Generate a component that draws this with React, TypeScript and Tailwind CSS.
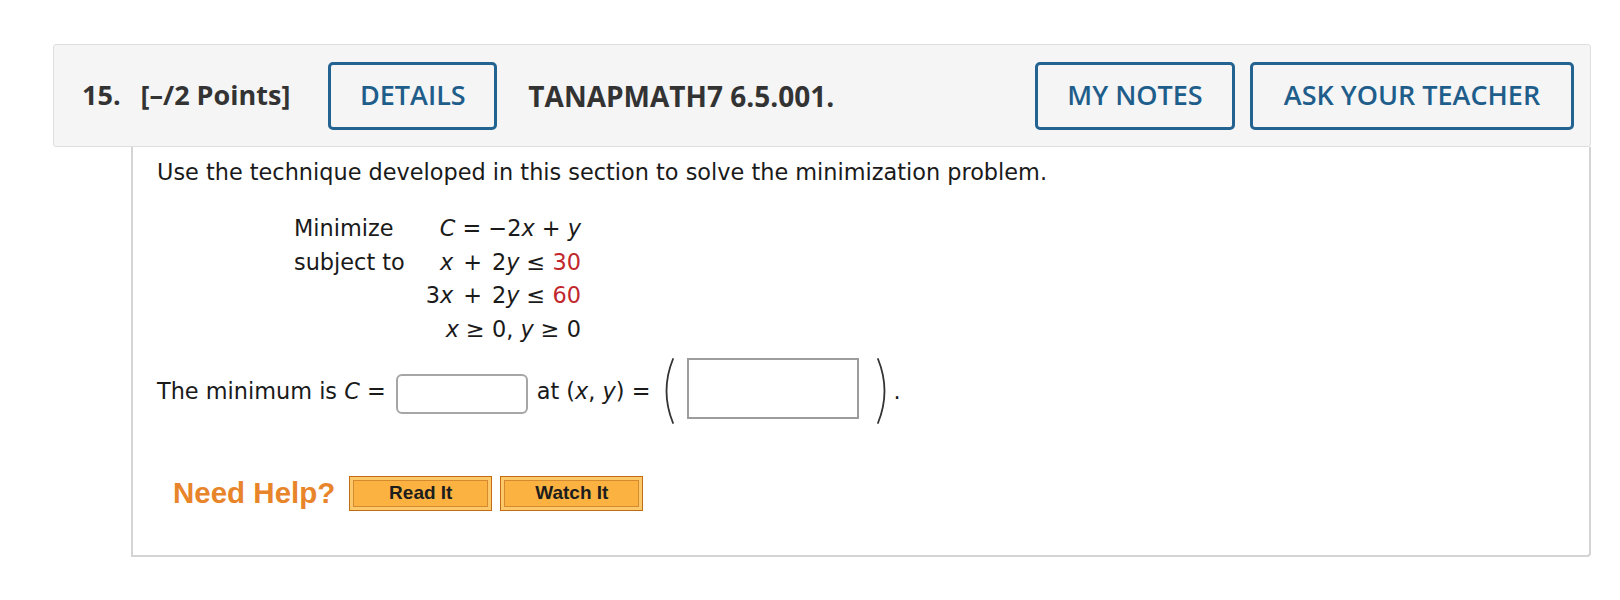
import React from "react";

function Paren({ side }: { side: "left" | "right" }) {
  const d = side === "left" ? "M13 1 Q 0 33 13 65" : "M3 1 Q 16 33 3 65";
  return (
    <svg width="16" height="66" viewBox="0 0 16 66" className="shrink-0">
      <path d={d} fill="none" stroke="#333" strokeWidth="1.8" strokeLinecap="round" />
    </svg>
  );
}

function HeaderButton({ label, width }: { label: string; width: string }) {
  return (
    <button
      className={`${width} h-[68px] shrink-0 rounded-[5px] border-[3px] border-[#236391] bg-transparent text-[27px] font-semibold text-[#1f5e8b] font-['Open_Sans',sans-serif]`}
    >
      {label}
    </button>
  );
}

function HelpButton({ label }: { label: string }) {
  return (
    <div className="w-[143px] h-[35px] shrink-0 border border-[#c06d16] bg-[#fdc86a] p-[3px]">
      <div className="w-full h-full border border-[#d48a2e] bg-[#fbb241] flex items-center justify-center text-[19px] font-bold text-[#1d1d1d] font-['Liberation_Sans',Arial,sans-serif]">
        {label}
      </div>
    </div>
  );
}

export default function App() {
  return (
    <div className="w-[1620px] h-[600px] bg-white pt-[44px] pl-[53px] pr-[29px] font-['DejaVu_Sans',Verdana,sans-serif] text-[#1a1a1a]">
      {/* question header */}
      <div className="h-[103px] rounded-[3px] border border-[#dedede] bg-[#f5f5f5] flex items-center pl-[28px] pr-[16px] font-['Open_Sans',sans-serif] text-[#333]">
        <span className="text-[27px] font-bold">15.</span>
        <span className="ml-[20px] text-[27px] font-bold">[–/2 Points]</span>
        <div className="ml-[38px]">
          <HeaderButton label="DETAILS" width="w-[169px]" />
        </div>
        <span className="ml-[31px] text-[28px] font-bold">TANAPMATH7 6.5.001.</span>
        <div className="ml-auto flex gap-[15px]">
          <HeaderButton label="MY NOTES" width="w-[200px]" />
          <HeaderButton label="ASK YOUR TEACHER" width="w-[324px]" />
        </div>
      </div>

      {/* question body */}
      <div className="ml-[78px] border-x-2 border-b-2 border-[#d4d4d4] rounded-br-[4px] pl-[24px] pt-[9px] pb-[44px] text-[22.4px]">
        <div className="h-[33px] leading-[33px]">
          Use the technique developed in this section to solve the minimization problem.
        </div>

        <div className="mt-[23px] ml-[137px] grid grid-cols-[117px_170px] leading-[33.5px] whitespace-nowrap">
          <div>Minimize</div>
          <div className="text-right">
            <i>C</i> = −2<i>x</i> + <i>y</i>
          </div>
          <div>subject to</div>
          <div className="text-right">
            <i>x</i>
            <span className="mx-[10px]">+</span>2<i>y</i> ≤ <span className="text-[#c1272d]">30</span>
          </div>
          <div></div>
          <div className="text-right">
            3<i>x</i>
            <span className="mx-[10px]">+</span>2<i>y</i> ≤ <span className="text-[#c1272d]">60</span>
          </div>
          <div></div>
          <div className="text-right">
            <i>x</i> ≥ 0, <i>y</i> ≥ 0
          </div>
        </div>

        <div className="mt-[10px] h-[70px] flex items-center">
          <span className="leading-[33px]">
            The minimum is <i>C</i> =
          </span>
          <div className="ml-[10px] mt-[6px] w-[132px] h-[40px] rounded-[6px] border-2 border-[#a6a6a6] bg-white" />
          <span className="ml-[9px] leading-[33px]">
            at (<i>x</i>, <i>y</i>) =
          </span>
          <div className="ml-[10px]">
            <Paren side="left" />
          </div>
          <div className="ml-[11px] mb-[5px] w-[172px] h-[61px] border-2 border-[#9c9c9c] bg-white" />
          <div className="ml-[16px]">
            <Paren side="right" />
          </div>
          <span className="ml-[2px] leading-[33px]">.</span>
        </div>

        <div className="mt-[50px] h-[35px] flex items-center">
          <span className="ml-[16px] text-[29.5px] font-bold text-[#e8852a] font-['Liberation_Sans',Arial,sans-serif]">
            Need Help?
          </span>
          <div className="ml-[14px] flex gap-[8px]">
            <HelpButton label="Read It" />
            <HelpButton label="Watch It" />
          </div>
        </div>
      </div>
    </div>
  );
}
